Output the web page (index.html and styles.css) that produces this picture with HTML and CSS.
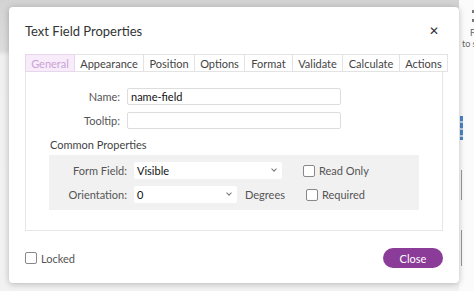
FILE: index.html
```html
<!DOCTYPE html>
<html lang="en">
<head>
  <meta charset="UTF-8">
  <title>Text Field Properties</title>
  <link rel="stylesheet" href="styles.css">
</head>
<body>

  <div class="side">
    <span class="side-dot"></span>
    <span class="side-dot"></span>
    <span class="side-text">F</span>
    <span class="side-text">to s</span>
    <span class="side-blue"></span>
    <span class="side-line one"></span>
    <span class="side-line two"></span>
  </div>

  <div class="dialog">
    <div class="dialog-header">
      <h1>Text Field Properties</h1>
      <span class="close-x">&#x2715;</span>
    </div>

    <div class="tabs">
      <div class="tab active">General</div>
      <div class="tab">Appearance</div>
      <div class="tab">Position</div>
      <div class="tab">Options</div>
      <div class="tab">Format</div>
      <div class="tab">Validate</div>
      <div class="tab">Calculate</div>
      <div class="tab">Actions</div>
    </div>

    <div class="panel">
      <div class="field-row">
        <label class="field-label">Name:</label>
        <div class="text-input">name-field</div>
      </div>
      <div class="field-row">
        <label class="field-label">Tooltip:</label>
        <div class="text-input"></div>
      </div>

      <h2>Common Properties</h2>
      <div class="common-box">
        <div class="common-row">
          <label class="common-label">Form Field:</label>
          <div class="select wide">Visible<span class="chev"></span></div>
          <span class="check-wrap"><span class="checkbox"></span>Read Only</span>
        </div>
        <div class="common-row">
          <label class="common-label">Orientation:</label>
          <div class="select narrow">0<span class="chev"></span></div>
          <span class="degrees">Degrees</span>
          <span class="check-wrap"><span class="checkbox"></span>Required</span>
        </div>
      </div>
    </div>

    <div class="dialog-footer">
      <span class="check-wrap"><span class="checkbox"></span>Locked</span>
      <button class="close-btn">Close</button>
    </div>
  </div>

</body>
</html>
```

FILE: styles.css
```css
body {
  margin: 0;
  padding: 7px 0 0 9px;
  width: 474px;
  height: 291px;
  box-sizing: border-box;
  overflow: hidden;
  position: relative;
  background: linear-gradient(to bottom, #d3d3d3 0px, #dcdcdc 50px, #f0f0f0 56px, #f2f2f2 100%);
  font-family: "Lato", "Noto Sans", sans-serif;
  color: #555;
  font-size: 11px;
}
.side {
  position: absolute;
  left: 459px;
  top: 0;
  width: 15px;
  height: 291px;
  background: #fbfbfb;
  overflow: hidden;
}
.side-dot {
  position: absolute;
  left: 13px;
  width: 2px;
  height: 3px;
  background: #777;
  top: 10px;
}
.side-dot + .side-dot {
  top: 19px;
}
.side-text {
  position: absolute;
  left: 11px;
  top: 27px;
  font-size: 9px;
  color: #666;
  white-space: nowrap;
}
.side-text + .side-text {
  top: 38px;
  left: 3px;
}
.side-blue {
  position: absolute;
  left: 1px;
  top: 116px;
  width: 3px;
  height: 24px;
  background: repeating-linear-gradient(to bottom, #4a84c4 0 5px, #b9cde3 5px 7px);
}
.side-line {
  position: absolute;
  left: 2px;
  width: 1px;
  background: #999;
}
.side-line.one { top: 170px; height: 30px; }
.side-line.two { top: 230px; height: 36px; }

.dialog {
  width: 450px;
  height: 276px;
  background: #fff;
  border-radius: 4px;
  box-shadow: 0 1px 6px rgba(0,0,0,0.25);
  padding: 0 16px;
  box-sizing: border-box;
  position: relative;
}
.dialog-header {
  height: 47px;
  display: flex;
  align-items: center;
  justify-content: space-between;
}
h1 {
  margin: 0;
  font-size: 13px;
  font-weight: normal;
  color: #333;
}
.close-x {
  font-size: 12px;
  color: #333;
  margin-right: 4px;
}
.tabs {
  display: flex;
  width: 423px;
  height: 18px;
}
.tab {
  border: 1px solid #e3e3e3;
  border-left: none;
  display: flex;
  align-items: center;
  justify-content: center;
  font-size: 11px;
  color: #444;
  box-sizing: border-box;
}
.tab:nth-child(1) { width: 50px; border-left: 1px solid #e3d0ea; }
.tab:nth-child(2) { width: 69px; }
.tab:nth-child(3) { width: 51px; }
.tab:nth-child(4) { width: 50px; }
.tab:nth-child(5) { width: 48px; }
.tab:nth-child(6) { width: 50px; }
.tab:nth-child(7) { width: 57px; }
.tab:nth-child(8) { width: 48px; }
.tab.active {
  background: #f8ecfa;
  color: #c9a2d6;
  border-color: #e8d6ee;
}
.panel {
  height: 159px;
  border: 1px solid #e6e6e6;
  border-top: none;
  box-sizing: border-box;
  padding-top: 16px;
}
.field-row {
  display: flex;
  align-items: center;
  gap: 7px;
  margin-bottom: 7px;
}
.field-label {
  width: 94px;
  text-align: right;
}
.text-input {
  width: 214px;
  height: 17px;
  border: 1px solid #ddd;
  border-radius: 2px;
  box-sizing: border-box;
  padding-left: 3px;
  line-height: 15px;
  color: #111;
}
h2 {
  margin: 3px 0 0 24px;
  font-size: 11px;
  font-weight: normal;
  color: #444;
  height: 18px;
  line-height: 18px;
}
.common-box {
  margin: 1px 0 0 23px;
  width: 370px;
  height: 55px;
  background: #f1f1f1;
  padding-top: 7px;
  box-sizing: border-box;
}
.common-row {
  display: flex;
  align-items: center;
  height: 17px;
  margin-bottom: 7px;
}
.common-label {
  width: 78px;
  text-align: right;
  margin-right: 7px;
}
.select {
  height: 17px;
  background: #fff;
  border-radius: 2px;
  box-sizing: border-box;
  padding-left: 3px;
  line-height: 17px;
  color: #111;
  position: relative;
}
.select.wide { width: 148px; margin-right: 21px; }
.select.narrow { width: 103px; margin-right: 8px; }
.chev {
  position: absolute;
  right: 6px;
  top: 5px;
  width: 3px;
  height: 3px;
  border-right: 1px solid #777;
  border-bottom: 1px solid #777;
  transform: rotate(45deg);
}
.degrees {
  margin-right: 21px;
}
.check-wrap {
  display: flex;
  align-items: center;
  gap: 4px;
  color: #555;
}
.checkbox {
  width: 12px;
  height: 12px;
  border: 1px solid #888;
  border-radius: 2px;
  box-sizing: border-box;
  background: #fff;
}
.dialog-footer {
  display: flex;
  justify-content: space-between;
  align-items: center;
  margin-top: 17px;
  height: 20px;
}
.close-btn {
  width: 60px;
  height: 20px;
  border: none;
  border-radius: 10px;
  background: #8a3c98;
  color: #fff;
  font-family: "Lato", "Noto Sans", sans-serif;
  font-size: 11px;
  padding: 0;
}
```
